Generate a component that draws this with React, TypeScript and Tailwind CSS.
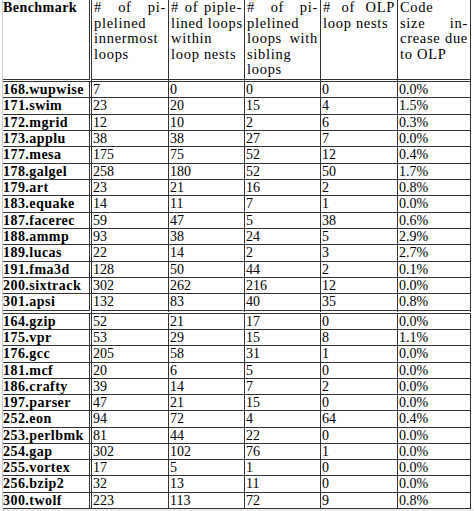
const group1: string[][] = [
  ['168.wupwise', '7', '0', '0', '0', '0.0%'],
  ['171.swim', '23', '20', '15', '4', '1.5%'],
  ['172.mgrid', '12', '10', '2', '6', '0.3%'],
  ['173.applu', '38', '38', '27', '7', '0.0%'],
  ['177.mesa', '175', '75', '52', '12', '0.4%'],
  ['178.galgel', '258', '180', '52', '50', '1.7%'],
  ['179.art', '23', '21', '16', '2', '0.8%'],
  ['183.equake', '14', '11', '7', '1', '0.0%'],
  ['187.facerec', '59', '47', '5', '38', '0.6%'],
  ['188.ammp', '93', '38', '24', '5', '2.9%'],
  ['189.lucas', '22', '14', '2', '3', '2.7%'],
  ['191.fma3d', '128', '50', '44', '2', '0.1%'],
  ['200.sixtrack', '302', '262', '216', '12', '0.0%'],
  ['301.apsi', '132', '83', '40', '35', '0.8%'],
];

const group2: string[][] = [
  ['164.gzip', '52', '21', '17', '0', '0.0%'],
  ['175.vpr', '53', '29', '15', '8', '1.1%'],
  ['176.gcc', '205', '58', '31', '1', '0.0%'],
  ['181.mcf', '20', '6', '5', '0', '0.0%'],
  ['186.crafty', '39', '14', '7', '2', '0.0%'],
  ['197.parser', '47', '21', '15', '0', '0.0%'],
  ['252.eon', '94', '72', '4', '64', '0.4%'],
  ['253.perlbmk', '81', '44', '22', '0', '0.0%'],
  ['254.gap', '302', '102', '76', '1', '0.0%'],
  ['255.vortex', '17', '5', '1', '0', '0.0%'],
  ['256.bzip2', '32', '13', '11', '0', '0.0%'],
  ['300.twolf', '223', '113', '72', '9', '0.8%'],
];

// [text, justified]
const headers: [string, boolean][][] = [
  [['# of pi-', true], ['plelined', false], ['innermost', false], ['loops', false]],
  [['# of piple-', true], ['lined loops', true], ['within', false], ['loop nests', false]],
  [['# of pi-', true], ['plelined', false], ['loops with', true], ['sibling', false], ['loops', false]],
  [['# of OLP', true], ['loop nests', false]],
  [['Code', false], ['size in-', true], ['crease due', true], ['to OLP', false]],
];

const grid = 'grid grid-cols-[89px_77px_76px_76px_77px_73px]';

const Row: React.FC<{ cells: string[]; last?: boolean; h: string }> = ({ cells, last, h }) => {
  const bottom = last
    ? 'border-b-[4px] border-b-[#333] [border-bottom-style:double]'
    : 'border-b border-b-[#333]';
  return (
    <div className={grid}>
      {cells.map((c, i) => (
        <div
          key={i}
          className={
            h +
            ' ' +
            bottom +
            ' leading-[15.3px] whitespace-nowrap ' +
            (i === 0
              ? 'border-r-[3px] border-r-[#333] [border-right-style:double] pl-0 font-bold text-[14px] tracking-[0.45px]'
              : 'border-r border-r-[#333] pl-px text-[14px]')
          }
        >
          {c}
        </div>
      ))}
    </div>
  );
};

export default function App() {
  return (
    <div className="w-[474px] h-[511px] bg-white flex flex-col text-black overflow-hidden font-['Liberation_Serif','Times_New_Roman',serif]">
      <div className="ml-[2px] w-[470px] border-l border-l-[#cfcfcf]">
        <div className={grid}>
          <div className="h-[82px] border-b-[3px] border-b-[#333] [border-bottom-style:double] border-r-[3px] border-r-[#333] [border-right-style:double] font-bold text-[14px] tracking-[0.45px] leading-[15.4px] pt-[0.3px]">
            Benchmark
          </div>
          {headers.map((lines, i) => (
            <div
              key={i}
              className="h-[82px] border-b-[3px] border-b-[#333] [border-bottom-style:double] border-r border-r-[#333] px-[2px] text-[14.5px] tracking-[0.7px] leading-[15.4px] pt-[0.3px]"
            >
              {lines.map(([t, j], k) => (
                <div
                  key={k}
                  className={'whitespace-nowrap ' + (j ? 'text-justify [text-align-last:justify]' : '')}
                >
                  {t}
                </div>
              ))}
            </div>
          ))}
        </div>
        {group1.map((r, i) => (
          <Row
            key={r[0]}
            cells={r}
            last={i === group1.length - 1}
            h={i === group1.length - 1 ? 'h-[19.35px]' : 'h-[16.35px]'}
          />
        ))}
        {group2.map((r) => (
          <Row key={r[0]} cells={r} h="h-[16.25px]" />
        ))}
      </div>
      <div className="flex-1 bg-[#ebebeb]" />
    </div>
  );
}
